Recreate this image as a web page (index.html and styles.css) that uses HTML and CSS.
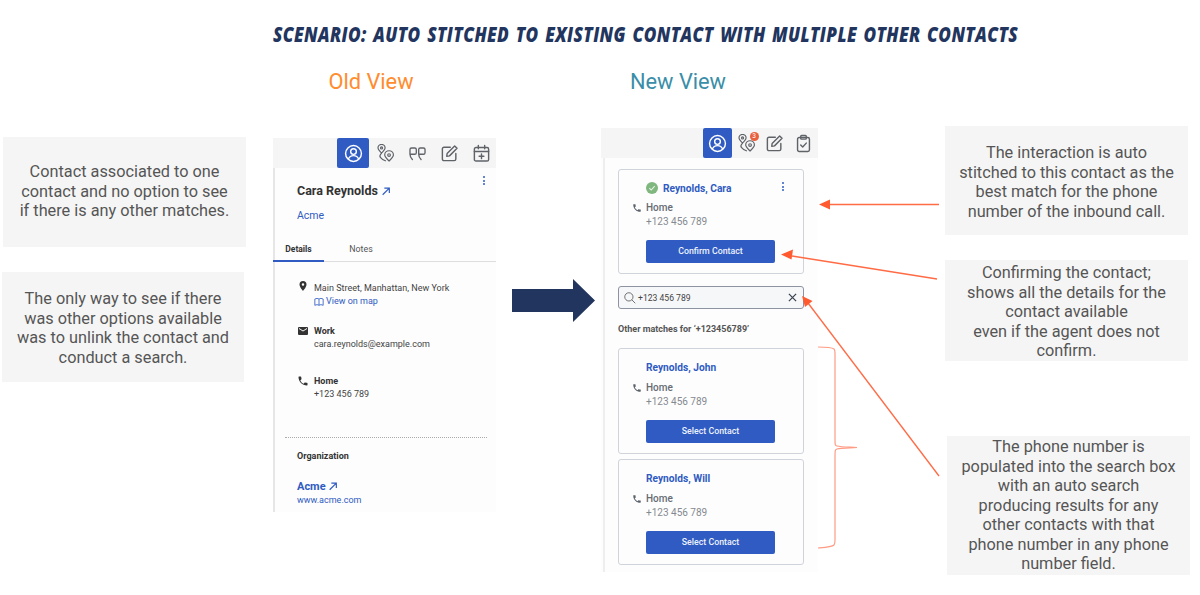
FILE: index.html
```html
<!DOCTYPE html>
<html lang="en">
<head>
    <meta charset="UTF-8" />
    <title>Scenario: auto stitched to existing contact</title>
    <link rel="stylesheet" href="styles.css">
</head>
<body>
<svg class="defs" width="0" height="0">
    <symbol id="i-phone" viewBox="0 0 24 24"><path fill="currentColor" d="M6.6 10.8c1.4 2.8 3.8 5.100 6.600 6.600l2.200-2.200c.3-.3.700-.4 1-.2 1.100.4 2.300.6 3.600.6.600 0 1 .4 1 1V20c0 .6-.4 1-1 1C10.600 21 3 13.400 3 4c0-.6.400-1 1-1h3.500c.6 0 1 .4 1 1 0 1.300.2 2.500.6 3.600.1.300 0 .7-.2 1z"/></symbol>
    <symbol id="i-user" viewBox="0 0 24 24"><g fill="none" stroke="currentColor" stroke-width="1.800"><circle cx="12" cy="12" r="10"/><circle cx="12" cy="9.500" r="3.600"/><path d="M5.500 19c1.200-3 3.500-4.300 6.500-4.300s5.300 1.300 6.500 4.300"/></g></symbol>
    <symbol id="i-pins" viewBox="0 0 24 24"><g fill="none" stroke="currentColor" stroke-width="1.500"><path d="M7 11.500C4.500 8.500 2.500 6.800 2.500 5a4.500 4.500 0 0 1 9 0c0 1.800-2 3.500-4.500 6.500z"/><circle cx="7" cy="5" r="1.300"/><path d="M16.500 21.500c-3-3-5.500-5-5.500-7.500a5.500 5.500 0 0 1 11 0c0 2.500-2.500 4.500-5.500 7.500z"/><circle cx="16.500" cy="14" r="1.700"/><path d="M7 11.500c-2 2-3 3.500-1.500 5.500s4 3.500 7 4.500"/></g></symbol>
    <symbol id="i-note" viewBox="0 0 24 24"><g fill="none" stroke="currentColor" stroke-width="1.800" stroke-linecap="round" stroke-linejoin="round"><path d="M20 12v7a2 2 0 0 1-2 2H5a2 2 0 0 1-2-2V6a2 2 0 0 1 2-2h8"/><path d="M9 12L18.500 2.500l3 3L12 15l-3.500.5z"/></g></symbol>
    <symbol id="i-quote" viewBox="0 0 24 24"><g fill="none" stroke="currentColor" stroke-width="1.700" stroke-linejoin="round" stroke-linecap="round"><path d="M5.500 19.500C3.500 17.500 2.500 15.500 2.500 13V7a2 2 0 0 1 2-2h4a2 2 0 0 1 2 2v4a2 2 0 0 1-2 2h-6"/><path d="M16.500 19.500c-2-2-3-4-3-6.500V7a2 2 0 0 1 2-2h4a2 2 0 0 1 2 2v4a2 2 0 0 1-2 2h-6"/></g></symbol>
    <symbol id="i-cal" viewBox="0 0 24 24"><g fill="none" stroke="currentColor" stroke-width="1.800" stroke-linecap="round"><rect x="3" y="4.500" width="18" height="17" rx="2"/><path d="M3 9.500h18M8 2v4M16 2v4M12 12.500v6M9 15.500h6"/></g></symbol>
    <symbol id="i-task" viewBox="0 0 24 24"><g fill="none" stroke="currentColor" stroke-width="1.800" stroke-linecap="round" stroke-linejoin="round"><rect x="4.500" y="4.500" width="15" height="17.500" rx="2"/><rect x="8.500" y="2" width="7" height="4.500" rx="1"/><path d="M8.500 14l2.500 2.500 4.500-5"/></g></symbol>
    <symbol id="i-out" viewBox="0 0 12 12"><path d="M2 10.500L10 2.500M4 2.500h6v6" fill="none" stroke="currentColor" stroke-width="1.400"/></symbol>
</svg>

<div class="slide">
    <h1 class="title">Scenario: auto stitched to existing contact with multiple other contacts</h1>
    <h2 class="view-label old-label">Old View</h2>
    <h2 class="view-label new-label">New View</h2>

    <p class="note note-a">Contact associated to one<br>contact and no option to see<br>if there is any other matches.</p>
    <p class="note note-b">The only way to see if there<br>was other options available<br>was to unlink the contact and<br>conduct a search.</p>
    <p class="note note-c">The interaction is auto<br>stitched to this contact as the<br>best match for the phone<br>number of the inbound call.</p>
    <p class="note note-d">Confirming the contact;<br>shows all the details for the<br>contact available<br>even if the agent does not<br>confirm.</p>
    <p class="note note-e">The phone number is<br>populated into the search box<br>with an auto search<br>producing results for any<br>other contacts with that<br>phone number in any phone<br>number field.</p>

    <!-- old panel -->
    <section class="panel panel-old">
        <div class="toolbar">
            <span class="tool active"><svg><use href="#i-user"/></svg></span>
            <span class="tool"><svg><use href="#i-pins"/></svg></span>
            <span class="tool"><svg><use href="#i-quote"/></svg></span>
            <span class="tool"><svg><use href="#i-note"/></svg></span>
            <span class="tool"><svg><use href="#i-cal"/></svg></span>
        </div>
        <div class="old-body">
            <div class="old-head">
                <div class="old-name">Cara Reynolds <svg class="out"><use href="#i-out"/></svg></div>
                <span class="dots old-dots"><i></i><i></i><i></i></span>
            </div>
            <div class="old-company">Acme</div>
            <div class="tabs">
                <span class="tab on">Details</span>
                <span class="tab">Notes</span>
            </div>
            <div class="info info-addr">
                <svg class="info-icon" viewBox="0 0 24 24"><path fill="currentColor" fill-rule="evenodd" d="M12 2a7 7 0 0 0-7 7c0 5 7 13 7 13s7-8 7-13a7 7 0 0 0-7-7zm0 4.500a2.500 2.500 0 1 1 0 5 2.500 2.500 0 0 1 0-5z"/></svg>
                <div>
                    <div>Main Street, Manhattan, New York</div>
                    <div class="map-link">
                        <svg class="map-icon" viewBox="0 0 24 24"><path fill="none" stroke="currentColor" stroke-width="2" stroke-linejoin="round" d="M2 5c4-2 7-2 10 0 3-2 6-2 10 0v15c-4-2-7-2-10 0-3-2-6-2-10 0zM12 5v15"/></svg>
                        View on map
                    </div>
                </div>
            </div>
            <div class="info info-work">
                <svg class="info-icon" viewBox="0 0 24 24"><path fill="currentColor" d="M20 4H4a2 2 0 0 0-2 2v12a2 2 0 0 0 2 2h16a2 2 0 0 0 2-2V6a2 2 0 0 0-2-2zm0 4l-8 5-8-5V6l8 5 8-5z"/></svg>
                <div><b>Work</b><div>cara.reynolds@example.com</div></div>
            </div>
            <div class="info info-home">
                <svg class="info-icon"><use href="#i-phone"/></svg>
                <div><b>Home</b><div>+123 456 789</div></div>
            </div>
            <div class="dotted"></div>
            <div class="org-title">Organization</div>
            <div class="org-name">Acme <svg class="out"><use href="#i-out"/></svg></div>
            <div class="org-url">www.acme.com</div>
        </div>
    </section>

    <!-- new panel -->
    <section class="panel panel-new">
        <div class="toolbar">
            <span class="tool active"><svg><use href="#i-user"/></svg></span>
            <span class="tool"><svg><use href="#i-pins"/></svg><em class="badge">3</em></span>
            <span class="tool"><svg><use href="#i-note"/></svg></span>
            <span class="tool"><svg><use href="#i-task"/></svg></span>
        </div>
        <div class="new-body">
            <article class="card">
                <div class="card-name">
                    <svg class="check" viewBox="0 0 12 12"><circle cx="6" cy="6" r="6" fill="#7fb77e"/><path d="M3.300 6.200l1.900 1.800 3.500-3.800" fill="none" stroke="#e8f3e6" stroke-width="1.100"/></svg>
                    Reynolds, Cara
                    <span class="dots card-dots"><i></i><i></i><i></i></span>
                </div>
                <div class="card-kind"><svg class="phone"><use href="#i-phone"/></svg>Home</div>
                <div class="card-num">+123 456 789</div>
                <button class="btn">Confirm Contact</button>
            </article>

            <div class="search">
                <svg class="search-icon" viewBox="0 0 16 16"><circle cx="6.500" cy="6.500" r="5.500" fill="none" stroke="currentColor" stroke-width="1.100"/><path d="M10.500 10.500L15 15" stroke="currentColor" stroke-width="1.100"/></svg>
                <span class="search-text">+123 456 789</span>
                <svg class="search-x" viewBox="0 0 10 10"><path d="M1 1l8 8M9 1L1 9" stroke="currentColor" stroke-width="1.400"/></svg>
            </div>

            <div class="other">Other matches for ‘+123456789’</div>

            <article class="card card-match">
                <div class="card-name">Reynolds, John</div>
                <div class="card-kind"><svg class="phone"><use href="#i-phone"/></svg>Home</div>
                <div class="card-num">+123 456 789</div>
                <button class="btn">Select Contact</button>
            </article>
            <article class="card card-match">
                <div class="card-name">Reynolds, Will</div>
                <div class="card-kind"><svg class="phone"><use href="#i-phone"/></svg>Home</div>
                <div class="card-num">+123 456 789</div>
                <button class="btn">Select Contact</button>
            </article>
        </div>
    </section>

    <!-- arrows on top of everything -->
    <svg class="overlay" width="1200" height="595" viewBox="0 0 1200 595">
        <path d="M512 289h61v-10l22 21.500-22 21.500v-10h-61z" fill="#22355e"/>
        <g fill="none" stroke="#ff6b45" stroke-width="1.300">
            <path d="M939 204.500H830"/>
            <path d="M937 279L792 256"/>
            <path d="M939 476L808 303"/>
        </g>
        <path d="M819 204.500l11-5v10z" fill="#ff5a30"/>
        <path d="M781 254.500l12-5-1.500 10z" fill="#ff5a30"/>
        <path d="M802 296l10.500 5-7.500 6z" fill="#ff5a30"/>
        <path d="M818 347c6 0 14 .5 16 2 1 1 1 2 1 4v86c0 5 0 7 2 7 4 1 12 1 20 1.500-8 .5-16 .5-20 1.500-2 .5-2 2-2 7v84c0 3 0 4-1 5-2 2-10 2.500-16 3" fill="none" stroke="#ff9c85" stroke-width="1.200"/>
    </svg>
</div>
</body>
</html>
```

FILE: styles.css
```css
html, body {
    margin: 0;
    padding: 0;
    background: #fff;
    font-family: Roboto, "Liberation Sans", sans-serif;
}
.defs { position: absolute; }
.slide {
    position: relative;
    width: 1200px;
    height: 595px;
    overflow: hidden;
}
.overlay { position: absolute; top: 0; left: 0; pointer-events: none; }

/* slide headings */
.title {
    position: absolute;
    top: 20px;
    left: 273px;
    margin: 0;
    font-family: "Open Sans", sans-serif;
    font-size: 21px;
    line-height: 28px;
    font-weight: 800;
    font-style: italic;
    letter-spacing: .5px;
    word-spacing: 2px;
    text-transform: uppercase;
    white-space: nowrap;
    color: #22355e;
    transform: scaleX(.817);
    transform-origin: left center;
}
.view-label {
    position: absolute;
    top: 68px;
    width: 160px;
    margin: 0;
    font-size: 21.800px;
    line-height: 28px;
    font-weight: 400;
    text-align: center;
}
.old-label { left: 291px; color: #ff8c2e; }
.new-label { left: 598px; color: #3a8ea8; }

/* grey notes */
.note {
    position: absolute;
    box-sizing: border-box;
    margin: 0;
    background: #f5f5f5;
    color: #555;
    font-size: 16.300px;
    line-height: 19.500px;
    text-align: center;
    white-space: nowrap;
}
.note-a { left: 3px; top: 137px; width: 243px; height: 110px; padding-top: 25px; }
.note-b { left: 2px; top: 272px; width: 242px; height: 110px; padding-top: 17px; }
.note-c { left: 945px; top: 126px; width: 243px; height: 109px; padding-top: 17px; }
.note-d { left: 945px; top: 260px; width: 243px; height: 101px; padding-top: 3px; }
.note-e { left: 947px; top: 436px; width: 243px; height: 139px; padding-top: 1px; }

/* panels */
.panel { position: absolute; background: #fdfdfd; color: #333; }
.panel-old { left: 273px; top: 138px; width: 223px; height: 374px; overflow: hidden; }
.panel-new { left: 601px; top: 128px; width: 217px; height: 444px; }

.toolbar {
    display: flex;
    justify-content: flex-end;
    height: 30px;
    background: #f5f5f5;
}
.panel-old .toolbar { margin-right: -2px; }
.tool {
    position: relative;
    display: flex;
    align-items: center;
    justify-content: center;
    width: 32.200px;
    color: #5f6368;
}
.panel-new .tool { width: 28.700px; }
.tool svg { width: 19px; height: 19px; }
.tool.active { background: #2f5bc2; color: #fff; border-radius: 2px; }
.badge {
    position: absolute;
    top: 4px;
    right: 2px;
    width: 9px;
    height: 9px;
    border-radius: 50%;
    background: #e8603c;
    color: #fff;
    font-size: 6.500px;
    line-height: 9px;
    font-style: normal;
    text-align: center;
}

.dots { display: inline-flex; flex-direction: column; gap: 1.500px; }
.dots i { width: 2px; height: 2px; border-radius: 50%; background: #2f5bc2; }
.out { width: 10px; height: 10px; color: #2f5bc2; vertical-align: -1px; }

/* old view */
.old-body {
    position: relative;
    box-sizing: border-box;
    height: 344px;
    border-left: 2px solid #e6e6e6;
    font-size: 9px;
    line-height: 13px;
    color: #444;
}
.old-head { display: flex; justify-content: space-between; padding: 8px 11px 0 22px; }
.old-name { margin-top: 7px; font-size: 12.500px; line-height: 16px; font-weight: 700; color: #333; }
.old-company { margin: 10px 0 0 22px; font-size: 10.500px; line-height: 14px; color: #2f5bc2; }
.tabs {
    display: flex;
    height: 21px;
    margin: 17px 0 0 -2px;
    border-bottom: 1px solid #ddd;
    font-size: 8.500px;
    line-height: 18px;
}
.tab { width: 51px; text-align: center; color: #555; }
.tab + .tab { width: 74px; font-size: 8.800px; }
.tab.on { box-sizing: border-box; height: 22px; border-bottom: 2px solid #2f5bc2; font-weight: 700; color: #333; }
.info { display: flex; gap: 5px; padding-left: 22px; }
.info b { color: #333; font-weight: 700; }
.info-icon { flex: none; width: 12px; height: 12px; margin-top: 0; color: #333; }
.info-addr { margin-top: 20px; }
.info-addr .info-icon { margin-top: -2px; }
.info-work { margin-top: 17px; }
.info-home { margin-top: 24px; }
.map-link { color: #2f5bc2; display: flex; align-items: center; gap: 2px; }
.map-icon { width: 10px; height: 10px; }
.dotted { margin: 36px 9px 0 10px; border-top: 1px dotted #aaa; }
.org-title { margin: 12px 0 0 22px; font-weight: 700; color: #333; }
.org-name { margin: 17px 0 0 22px; font-size: 11px; line-height: 14px; font-weight: 700; color: #2f5bc2; }
.org-url { margin-left: 22px; color: #2f5bc2; }

/* new view */
.new-body {
    box-sizing: border-box;
    height: 414px;
    margin-left: 2px;
    padding: 11px 14px 0 13px;
    border-left: 2px solid #eee;
}
.card {
    box-sizing: border-box;
    height: 105px;
    padding: 11px 28px 0 27px;
    background: #fdfdfd;
    border: 1px solid #cfd3da;
    border-radius: 3px;
}
.card-match { height: 106px; margin-top: 5px; padding-top: 11px; }
.other + .card-match { margin-top: 12px; }
.card-name {
    position: relative;
    display: flex;
    align-items: center;
    height: 14px;
    font-size: 10.200px;
    font-weight: 700;
    color: #2f5bc2;
}
.check { width: 12px; height: 12px; margin-right: 5px; }
.card-dots { position: absolute; right: -9px; top: 1px; }
.card-kind {
    position: relative;
    margin-top: 6px;
    font-size: 10px;
    line-height: 14px;
    font-weight: 500;
    color: #666c74;
}
.card-match .card-kind { margin-top: 7px; }
.phone { position: absolute; left: -14px; top: 2px; width: 10px; height: 10px; color: #5c636b; }
.card-num { font-size: 10px; line-height: 14px; color: #858a91; }
.btn {
    display: block;
    width: 129px;
    height: 22.500px;
    margin-top: 11px;
    padding: 0;
    border: none;
    border-radius: 2px;
    background: #2f5bc2;
    color: #eef2fb;
    font-family: inherit;
    font-size: 8.800px;
    font-weight: 500;
}
.search {
    box-sizing: border-box;
    display: flex;
    align-items: center;
    height: 23px;
    margin-top: 12px;
    padding: 0 6px 0 5px;
    background: #f6f7f9;
    border: 1px solid #8d93a1;
    border-radius: 3px;
    font-size: 8.600px;
    color: #444;
}
.search-icon { width: 12px; height: 12px; margin-right: 2px; color: #555; }
.search-text { flex: 1; }
.search-x { width: 9px; height: 9px; color: #3a4250; }
.other { margin-top: 14px; font-size: 9px; line-height: 13px; font-weight: 700; color: #555; }
```
